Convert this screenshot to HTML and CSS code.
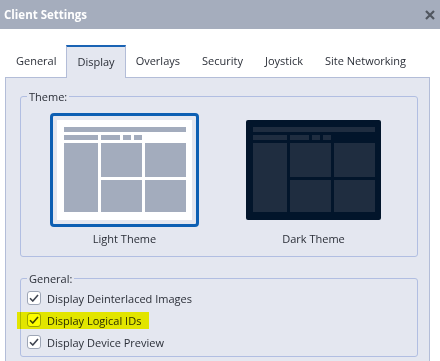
FILE: index.html
```html
<!DOCTYPE html>
<html lang="en">
<head>
  <meta charset="UTF-8">
  <meta name="viewport" content="width=device-width, initial-scale=1.0">
  <title>Client Settings</title>
  <link rel="stylesheet" href="styles.css">
</head>
<body>
  <div class="dialog">
    <div class="titlebar">
      <span class="title">Client Settings</span>
      <span class="close"><svg width="10" height="10" viewBox="0 0 10 10"><path d="M1 1 L9 9 M9 1 L1 9" stroke="#50565f" stroke-width="2.2"/></svg></span>
    </div>
    <div class="tabs">
      <div class="tab">General</div>
      <div class="tab active">Display</div>
      <div class="tab">Overlays</div>
      <div class="tab">Security</div>
      <div class="tab">Joystick</div>
      <div class="tab">Site Networking</div>
    </div>
    <div class="panel">
      <fieldset class="group theme-group">
        <legend>Theme:</legend>
        <div class="themes">
          <div class="theme-option">
            <div class="theme-card selected">
              <div class="mini light">
                <div class="bar wide"></div>
                <div class="bar"></div>
                <div class="bar-row"><div class="bar b1"></div><div class="bar b2"></div><div class="bar b2"></div></div>
                <div class="block side"></div>
                <div class="block"></div>
                <div class="block"></div>
                <div class="block"></div>
                <div class="block"></div>
              </div>
            </div>
            <div class="theme-label">Light Theme</div>
          </div>
          <div class="theme-option">
            <div class="theme-card">
              <div class="mini dark">
                <div class="bar wide"></div>
                <div class="bar"></div>
                <div class="bar-row"><div class="bar b1"></div><div class="bar b2"></div><div class="bar b2"></div></div>
                <div class="block side"></div>
                <div class="block"></div>
                <div class="block"></div>
                <div class="block"></div>
                <div class="block"></div>
              </div>
            </div>
            <div class="theme-label">Dark Theme</div>
          </div>
        </div>
      </fieldset>
      <fieldset class="group general-group">
        <legend>General:</legend>
        <label class="check-row">
          <span class="checkbox"><svg width="10" height="8" viewBox="0 0 10 8"><path d="M1 4.2 L3.8 7 L9 1" fill="none" stroke="#3f4450" stroke-width="1.6"/></svg></span>
          <span>Display Deinterlaced Images</span>
        </label>
        <label class="check-row marked">
          <span class="highlight"></span>
          <span class="checkbox"><svg width="10" height="8" viewBox="0 0 10 8"><path d="M1 4.2 L3.8 7 L9 1" fill="none" stroke="#3f4450" stroke-width="1.6"/></svg></span>
          <span>Display Logical IDs</span>
        </label>
        <label class="check-row">
          <span class="checkbox"><svg width="10" height="8" viewBox="0 0 10 8"><path d="M1 4.2 L3.8 7 L9 1" fill="none" stroke="#3f4450" stroke-width="1.6"/></svg></span>
          <span>Display Device Preview</span>
        </label>
      </fieldset>
    </div>
  </div>
</body>
</html>
```

FILE: styles.css
```css
body {
  margin: 0;
  background: #fff;
  font-family: 'Open Sans', 'Noto Sans', Arial, sans-serif;
  font-size: 11px;
  color: #2b2f38;
  overflow: hidden;
}
.dialog {
  width: 440px;
  height: 361px;
  display: flex;
  flex-direction: column;
}
.titlebar {
  height: 29px;
  background: #a5adbd;
  display: flex;
  align-items: center;
  justify-content: space-between;
  padding: 0 5px 0 4px;
  flex-shrink: 0;
}
.title {
  color: #fff;
  font-weight: bold;
  font-size: 11.5px;
}
.close {
  display: flex;
}
.tabs {
  display: flex;
  align-items: flex-end;
  margin-top: 15px;
  padding-left: 5px;
  height: 33px;
  flex-shrink: 0;
}
.tab {
  padding: 0 10px;
  height: 33px;
  line-height: 32px;
  box-sizing: border-box;
  border: 1px solid transparent;
  border-bottom: none;
}
.tab.active {
  background: #e4e7f0;
  border-color: #b3bdd8;
  border-top: 2px solid #1a63b4;
  line-height: 30px;
  margin: 0 -1px;
  position: relative;
  z-index: 1;
  top: 1px;
  height: 33px;
}
.panel {
  flex: 1;
  background: #e4e7f0;
  border: 1px solid #b3bdd8;
  border-bottom: none;
  margin: 0 10px 0 5px;
  padding: 11px 11px 0 14px;
}
.group {
  margin: 0;
  border: 1px solid #b1bee2;
  border-radius: 3px;
  padding: 0;
}
.group legend {
  margin-left: 6px;
  padding: 0 2px;
  line-height: 15px;
  font-size: 11px;
}
.themes {
  display: flex;
  justify-content: center;
  gap: 40px;
  padding: 9px 0 10px;
}
.theme-option {
  display: flex;
  flex-direction: column;
  align-items: center;
}
.theme-card {
  border: 3px solid transparent;
  border-radius: 4px;
  padding: 4px;
}
.theme-card.selected {
  border-color: #0d5fb3;
}
.theme-label {
  margin-top: 4px;
  line-height: 15px;
}
.mini {
  width: 135px;
  height: 100px;
  box-sizing: border-box;
  padding: 7px 6px 8px 7px;
  display: grid;
  grid-template-columns: 34px 41px 41px;
  grid-template-rows: 5px 5px 34px 32px;
  gap: 3px;
}
.mini .wide { grid-column: 1 / 4; }
.mini .bar-row {
  display: flex;
  gap: 3px;
  grid-column: 2 / 4;
}
.mini .b1 { width: 19px; }
.mini .b2 { width: 8px; }
.mini .side { grid-row: 3 / 5; }
.mini.light { background: #fff; }
.mini.light .bar, .mini.light .block { background: #a3acbd; }
.mini.light .bar-row { background: none; }
.mini.dark { background: #02152b; border-radius: 2px; }
.mini.dark .bar, .mini.dark .block { background: #1f2d40; }
.general-group {
  margin-top: 14px;
  padding: 1px 0 3px;
}
.check-row {
  display: flex;
  align-items: center;
  gap: 6px;
  height: 22px;
  padding-left: 6px;
  position: relative;
}
.checkbox {
  width: 14px;
  height: 14px;
  box-sizing: border-box;
  border: 1px solid #9ea6b6;
  border-radius: 3px;
  background: #fff;
  display: flex;
  align-items: center;
  justify-content: center;
}
.highlight {
  position: absolute;
  left: -4px;
  top: 3px;
  width: 132px;
  height: 17px;
  background: #fdfd00;
  mix-blend-mode: multiply;
  z-index: 1;
}
```
